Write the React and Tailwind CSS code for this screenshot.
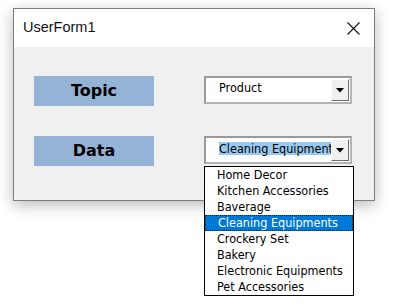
const ITEMS = [
  'Home Decor',
  'Kitchen Accessories',
  'Baverage',
  'Cleaning Equipments',
  'Crockery Set',
  'Bakery',
  'Electronic Equipments',
  'Pet Accessories',
]

const ctl = "font-['DejaVu_Sans',sans-serif] font-stretch-condensed text-[12.5px]"

function Arrow() {
  return (
    <div className="flex h-full w-[18px] shrink-0 items-center justify-center border border-t-white border-l-white border-r-[#6d6d6d] border-b-[#6d6d6d] bg-[#f0f0f0]">
      <svg width="8" height="5" viewBox="0 0 8 5">
        <path d="M0 0h8L4 4.5z" fill="#000" />
      </svg>
    </div>
  )
}

function Combo({ value, selected }) {
  return (
    <div className="flex h-[28px] w-[148px] items-stretch border-2 border-t-[#9a9a9a] border-l-[#9a9a9a] border-r-[#b4b4b4] border-b-[#b4b4b4] bg-white p-[1px]">
      <div className={`flex min-w-0 flex-1 items-center overflow-hidden whitespace-nowrap pb-[3px] pl-[12px] ${ctl} text-black`}>
        <span className={selected ? 'bg-[#99c9ef] leading-[13px]' : ''}>{value}</span>
      </div>
      <Arrow />
    </div>
  )
}

function Label({ children }) {
  return (
    <div className="flex h-[30px] w-[120px] items-center justify-center bg-[#95b3d7] pb-[1px] font-['DejaVu_Sans',sans-serif] text-[16px] font-bold text-black">
      {children}
    </div>
  )
}

export default function App() {
  return (
    <div className="relative h-[306px] w-[393px] overflow-hidden bg-white">
      <div className="ml-[13px] mt-[8px] w-[362px] border border-[#7d7d7d] shadow-[0_4px_14px_rgba(0,0,0,0.28)]">
        <div className="flex h-[38px] items-center justify-between bg-white pl-[9px] pr-[14px]">
          <span className="font-['Liberation_Sans',sans-serif] text-[14.5px] text-[#111]">UserForm1</span>
          <svg width="13" height="13" viewBox="0 0 13 13">
            <path d="M0.5 0.5l12 12M12.5 0.5l-12 12" stroke="#111" strokeWidth="1.1" />
          </svg>
        </div>
        <div className="flex h-[153px] flex-col gap-[30px] bg-[#f0f0f0] pl-[20px] pt-[29px]">
          <div className="flex items-start gap-[50px]">
            <Label>Topic</Label>
            <Combo value="Product" />
          </div>
          <div className="flex items-start gap-[50px]">
            <Label>Data</Label>
            <Combo value="Cleaning Equipments" selected />
          </div>
        </div>
      </div>

      {/* open list of the Data combo */}
      <div className={`absolute left-[204px] top-[166px] w-[150px] border border-black bg-white ${ctl} text-black`}>
        {ITEMS.map(item => (
          <div key={item}
            className={`flex h-[16px] items-center whitespace-nowrap pl-[12px] leading-none ${item === 'Cleaning Equipments' ? 'border border-dotted border-[#222] bg-[#0078d7] pl-[11px] text-white' : ''}`}>
            {item}
          </div>
        ))}
      </div>
    </div>
  )
}
